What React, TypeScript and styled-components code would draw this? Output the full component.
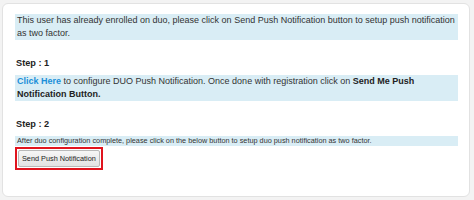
import React from "react";
import styled, { createGlobalStyle } from "styled-components";

const GlobalStyle = createGlobalStyle`
	html, body {
		margin: 0;
		padding: 0;
		background: #f3f3f3;
	}
	body {
		font-family: "Liberation Sans", Arial, sans-serif;
		color: #333;
	}
`;

const Page = styled.div`
	width: 474px;
	height: 200px;
	padding: 3px 4px 3px 2px;
	box-sizing: border-box;
`;

const Card = styled.section`
	height: 100%;
	box-sizing: border-box;
	background: #fff;
	border: 1px solid #e2e2e2;
	border-radius: 6px;
	padding: 10px 11px 0 12px;
`;

const Note = styled.div<{ $small?: boolean }>`
	background: #d9edf5;
	padding: 0 2px;
	font-size: ${(p) => (p.$small ? "7.3px" : "9px")};
	line-height: ${(p) => (p.$small ? "10px" : "13px")};
	color: #333;
	b {
		font-weight: bold;
		color: #222;
	}
	a {
		color: #1b8fd9;
		font-weight: bold;
		text-decoration: none;
	}
`;

const StepTitle = styled.h4`
	margin: 17px 0 5px 1px;
	font-size: 9.2px;
	line-height: 13px;
	font-weight: bold;
	color: #222;
`;

const ButtonFrame = styled.div`
	display: inline-block;
	margin-top: 1px;
	border: 2px solid #e0141e;
	padding: 1px;
`;

const PushButton = styled.button`
	display: block;
	font-family: "Liberation Sans", Arial, sans-serif;
	font-size: 7.3px;
	white-space: nowrap;
	color: #222;
	padding: 0 3px;
	height: 17px;
	background: linear-gradient(#f6f6f6, #e3e3e3);
	border: 1px solid #b9b9b9;
	border-radius: 2px;
`;

const App = () => {
	return (
		<Page>
			<GlobalStyle />
			<Card>
				<Note>
					This user has already enrolled on duo, please click on Send Push Notification button to setup push notification as two factor.
				</Note>
				<StepTitle>Step : 1</StepTitle>
				<Note>
					<a href="#">Click Here</a> to configure DUO Push Notification. Once done with registration click on{" "}
					<b>Send Me Push Notification Button.</b>
				</Note>
				<StepTitle>Step : 2</StepTitle>
				<Note $small>
					After duo configuration complete, please click on the below button to setup duo push notification as two factor.
				</Note>
				<ButtonFrame>
					<PushButton>Send Push Notification</PushButton>
				</ButtonFrame>
			</Card>
		</Page>
	);
};

export default App;
